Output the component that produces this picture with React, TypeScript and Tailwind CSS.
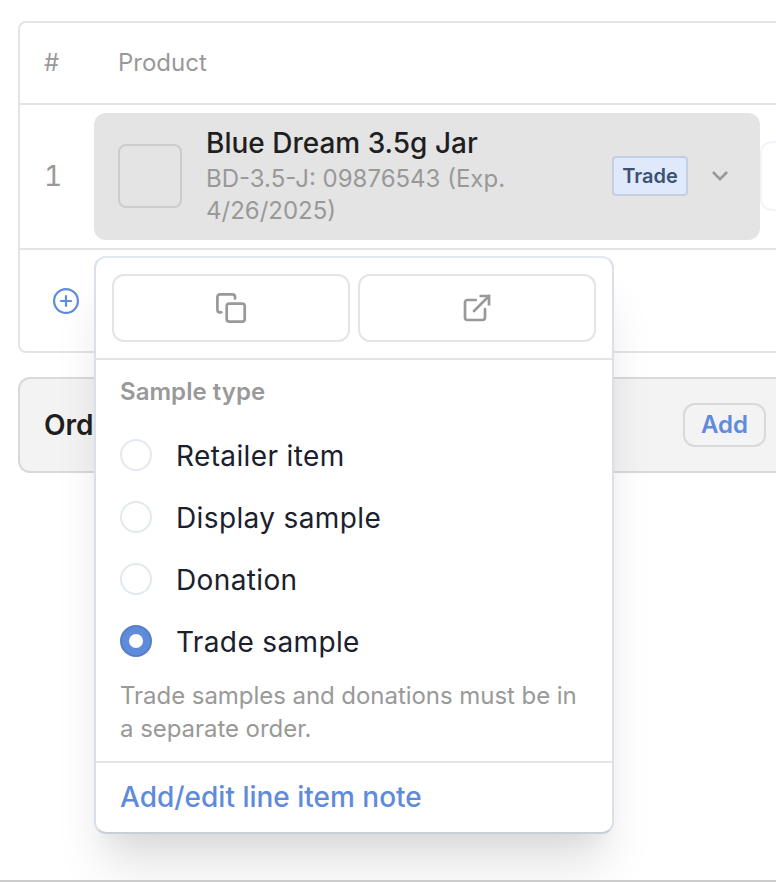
import { useState } from "react";

const sampleTypes = ["Retailer item", "Display sample", "Donation", "Trade sample"];

function CopyIcon() {
  return (
    <svg width="32" height="32" viewBox="0 0 32 32" fill="none" stroke="#999" strokeWidth="2.7" strokeLinecap="round" strokeLinejoin="round">
      <rect x="11.7" y="11.6" width="18" height="18" rx="2.6" />
      <path d="M6.3 20.300H5A2.6 2.6 0 0 1 2.400 17.700V5A2.600 2.600 0 0 1 5 2.400H17.400A2.600 2.600 0 0 1 20 5V6.600" />
    </svg>
  );
}

function ExternalIcon() {
  return (
    <svg width="32" height="32" viewBox="0 0 32 32" fill="none" stroke="#999" strokeWidth="2.7" strokeLinecap="round">
      <path d="M14.800 8H6.400A2.400 2.400 0 0 0 4 10.400V25.600A2.400 2.400 0 0 0 6.400 28H21.600A2.400 2.400 0 0 0 24 25.600V17.200" strokeLinejoin="round" />
      <path d="M18.500 4H28V13.500" strokeLinecap="butt" />
      <path d="M28 4L13 19" />
    </svg>
  );
}

function PlusCircle() {
  return (
    <svg width="28" height="28" viewBox="0 0 28 28" fill="none" stroke="#5f8bdc" strokeWidth="2.2" strokeLinecap="round">
      <circle cx="14" cy="14" r="11.900" />
      <path d="M14 9V19M9 14H19" />
    </svg>
  );
}

function OrderTable() {
  return (
    <div className="flex h-[332px] flex-col rounded-l-lg border-2 border-r-0 border-[#e4e4e4]">
      <div className="flex h-[82px] shrink-0 items-center border-b-2 border-[#e4e4e4] pl-6 text-2xl text-[#999]">
        <div className="w-[74px]">#</div>
        <div>Product</div>
      </div>
      <div className="flex h-[145px] shrink-0 items-center border-b-2 border-[#e4e4e4]">
        <div className="w-[74px] shrink-0 pb-0.5 pl-6 text-[28px] text-[#999] tabular-nums">1</div>
        <div className="flex h-[127px] w-[666px] shrink-0 items-center rounded-xl bg-[#e4e4e4] pb-0.5 pl-6">
          <div className="size-16 shrink-0 rounded-lg border-2 border-[#ccc]" />
          <div className="ml-6 w-[382px] shrink-0">
            <div className="text-[28px] font-medium leading-9 text-[#1f1f1f]">Blue Dream 3.5g Jar</div>
            <div className="mt-0.5 text-2xl leading-8 text-[#999]">BD-3.5-J: 09876543 (Exp. 4/26/2025)</div>
          </div>
          <div className="ml-6 flex h-10 w-[76px] shrink-0 items-center justify-center rounded border-2 border-[#c3d0e4] bg-[#dfe9fb] text-xl font-semibold text-[#3b5272]">
            Trade
          </div>
          <svg className="ml-6" width="16" height="10" viewBox="0 0 16 10" fill="none" stroke="#999" strokeWidth="2.6">
            <path d="M0.900 1L8 8.100L15.100 1" />
          </svg>
        </div>
        <div className="mb-0.5 h-[70px] flex-1 rounded-l-xl border-2 border-r-0 border-[#f3f3fa]" />
      </div>
      <div className="flex flex-1 items-center pl-8">
        <PlusCircle />
      </div>
    </div>
  );
}

function ItemMenu() {
  const [selected, setSelected] = useState("Trade sample");
  return (
    <div className="absolute top-[256px] left-[94px] flex h-[578px] w-[520px] flex-col rounded-xl border-2 border-x-[#dae0e8] border-t-[#e2e8f0] border-b-[#c9cfd6] bg-white shadow-[0_40px_50px_-10px_rgba(0,0,0,0.12),0_20px_20px_-10px_rgba(0,0,0,0.04)]">
      <div className="flex h-[102px] shrink-0 gap-2 border-b-2 border-[#e4e4e4] p-4">
        <button className="flex flex-1 items-center justify-center rounded-xl border-2 border-[#e4e4e4]"><CopyIcon /></button>
        <button className="flex flex-1 items-center justify-center rounded-xl border-2 border-[#e4e4e4]"><ExternalIcon /></button>
      </div>
      <div className="flex h-[403px] shrink-0 flex-col border-b-2 border-[#e4e4e4] px-6 pt-4">
        <div className="text-2xl font-semibold tracking-[0.040px] text-[#999]">Sample type</div>
        <div className="mt-4 flex flex-col">
          {sampleTypes.map((name) => (
            <button key={name} onClick={() => setSelected(name)} className="flex h-[62px] items-center gap-6 text-left text-[28px] tracking-[0.370px] text-[#1a202c]">
              {selected === name ? (
                <span className="flex size-8 items-center justify-center rounded-full border-2 border-[#567dc6] bg-[#5f8bdc]">
                  <span className="size-3.5 rounded-full bg-white" />
                </span>
              ) : (
                <span className="size-8 rounded-full border-2 border-[#e2e8f0]" />
              )}
              <span className="pt-0.5">{name}</span>
            </button>
          ))}
        </div>
        <p className="mt-[7px] text-2xl leading-[33px] tracking-[-0.050px] text-[#999]">Trade samples and donations must be in a separate order.</p>
      </div>
      <button className="flex flex-1 items-center px-6 pb-0.5 text-[28px] font-medium text-[#5f8bdc]">Add/edit line item note</button>
    </div>
  );
}

export default function App() {
  return (
    <div className="relative flex h-[882px] w-[776px] flex-col overflow-hidden border-b-2 border-[#ccc] bg-white pt-[21px] pl-[18px] font-['Inter',sans-serif]">
      <OrderTable />
      <div className="mt-6 flex h-24 items-center justify-between rounded-l-xl border-2 border-r-0 border-[#d9d9d9] bg-[#f3f3f3] pr-2.5 pl-6">
        <span className="text-[28px] font-semibold text-[#1f1f1f]">Order</span>
        <button className="h-11 w-[83px] rounded-xl border-2 border-[#d9d9d9] text-2xl font-semibold text-[#5f8bdc]">Add</button>
      </div>
      <ItemMenu />
    </div>
  );
}
